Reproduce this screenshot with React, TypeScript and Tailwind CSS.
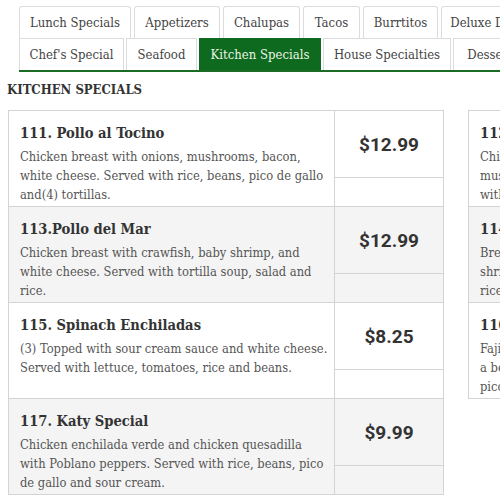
import React from "react";

const cond = { fontFamily: '"DejaVu Serif Condensed", "DejaVu Serif", serif' };

type Item = { title: string; lines: string[]; price: string };

const items: Item[] = [
  {
    title: "111. Pollo al Tocino",
    lines: [
      "Chicken breast with onions, mushrooms, bacon,",
      "white cheese. Served with rice, beans, pico de gallo",
      "and(4) tortillas.",
    ],
    price: "$12.99",
  },
  {
    title: "113.Pollo del Mar",
    lines: [
      "Chicken breast with crawfish, baby shrimp, and",
      "white cheese. Served with tortilla soup, salad and",
      "rice.",
    ],
    price: "$12.99",
  },
  {
    title: "115. Spinach Enchiladas",
    lines: [
      "(3) Topped with sour cream sauce and white cheese.",
      "Served with lettuce, tomatoes, rice and beans.",
    ],
    price: "$8.25",
  },
  {
    title: "117. Katy Special",
    lines: [
      "Chicken enchilada verde and chicken quesadilla",
      "with Poblano peppers. Served with rice, beans, pico",
      "de gallo and sour cream.",
    ],
    price: "$9.99",
  },
];

const items2: Item[] = [
  {
    title: "112. Pollo Ranchero",
    lines: ["Chicken breast with onions,", "mushrooms and white cheese. Served", "with rice and beans."],
    price: "$12.99",
  },
  {
    title: "114. Camarones",
    lines: ["Breaded shrimp with crawfish and", "shrimp. Served with salad and", "rice."],
    price: "$13.99",
  },
  {
    title: "116. Fajita Plate",
    lines: ["Fajitas served on", "a bed of onions, with rice, beans", "pico de gallo."],
    price: "$12.99",
  },
];

function Row({ item, gray, last }: { item: Item; gray: boolean; last?: boolean }) {
  return (
    <div className={`flex ${gray ? "bg-[#f4f4f4]" : "bg-white"} ${last ? "" : "border-b border-[#d4d4d4]"}`}>
      <div className="w-[326px] shrink-0 border-r border-[#d4d4d4] pl-[11px] pt-[11px]">
        <div className="text-[14.6px] font-bold leading-[22px] text-[#333]" style={cond}>
          {item.title}
        </div>
        <div className="mt-[3px] text-[12.8px] leading-[19px] text-[#555]" style={cond}>
          {item.lines.map((l, i) => (
            <div key={i} className="whitespace-nowrap">
              {l}
            </div>
          ))}
        </div>
      </div>
      <div className="flex w-[108px] shrink-0 flex-col">
        <div
          className="flex h-[67px] items-center justify-center border-b border-[#d4d4d4] pt-[3px] text-[19px] font-bold text-[#333]"
          style={{ fontFamily: 'Roboto, "Liberation Sans", sans-serif' }}
        >
          {item.price}
        </div>
        <div className="h-[28px]" />
      </div>
    </div>
  );
}

const row1 = [
  { t: "Lunch Specials", w: 112 },
  { t: "Appetizers", w: 86 },
  { t: "Chalupas", w: 77 },
  { t: "Tacos", w: 57 },
  { t: "Burrtitos", w: 75 },
  { t: "Deluxe Dinners", w: 110 },
];
const row2 = [
  { t: "Chef's Special", w: 105, a: false },
  { t: "Seafood", w: 71, a: false },
  { t: "Kitchen Specials", w: 122, a: true },
  { t: "House Specialties", w: 128, a: false },
  { t: "Desserts", w: 80, a: false },
];

export default function App() {
  return (
    <div className="relative h-[500px] w-[500px] overflow-hidden bg-white">
      <div className="pl-[19px] pt-[6px]">
        <div className="flex gap-[3px] whitespace-nowrap">
          {row1.map((t) => (
            <div
              key={t.t}
              style={{ width: t.w, ...cond }}
              className="flex h-[32px] shrink-0 items-center justify-center rounded-t-[3px] border border-b-0 border-[#dcdcdc] bg-white text-[13px] text-[#444]"
            >
              {t.t}
            </div>
          ))}
        </div>
        <div className="flex gap-[2px] whitespace-nowrap border-b-2 border-[#1a6b24]">
          {row2.map((t) => (
            <div
              key={t.t}
              style={{ width: t.w, ...cond }}
              className={`flex h-[32px] shrink-0 items-center justify-center border border-b-0 text-[13px] ${
                t.a ? "border-[#0d6a1e] bg-[#0d6a1e] text-[#eaf3e4]" : "border-[#dcdcdc] bg-white text-[#444]"
              }`}
            >
              {t.t}
            </div>
          ))}
        </div>
      </div>
      <div className="pl-[7px] pt-[8px] text-[13px] font-bold text-[#333]" style={cond}>
        KITCHEN SPECIALS
      </div>
      <div className="mt-[10px] flex items-start gap-[24px] pl-[8px]">
        <div className="w-[436px] shrink-0 border border-[#d4d4d4]">
          {items.map((it, i) => (
            <Row key={i} item={it} gray={i % 2 === 1} last={i === items.length - 1} />
          ))}
        </div>
        <div className="w-[436px] shrink-0 border border-[#d4d4d4]">
          {items2.map((it, i) => (
            <Row key={i} item={it} gray={i % 2 === 1} last={i === items2.length - 1} />
          ))}
        </div>
      </div>
    </div>
  );
}
